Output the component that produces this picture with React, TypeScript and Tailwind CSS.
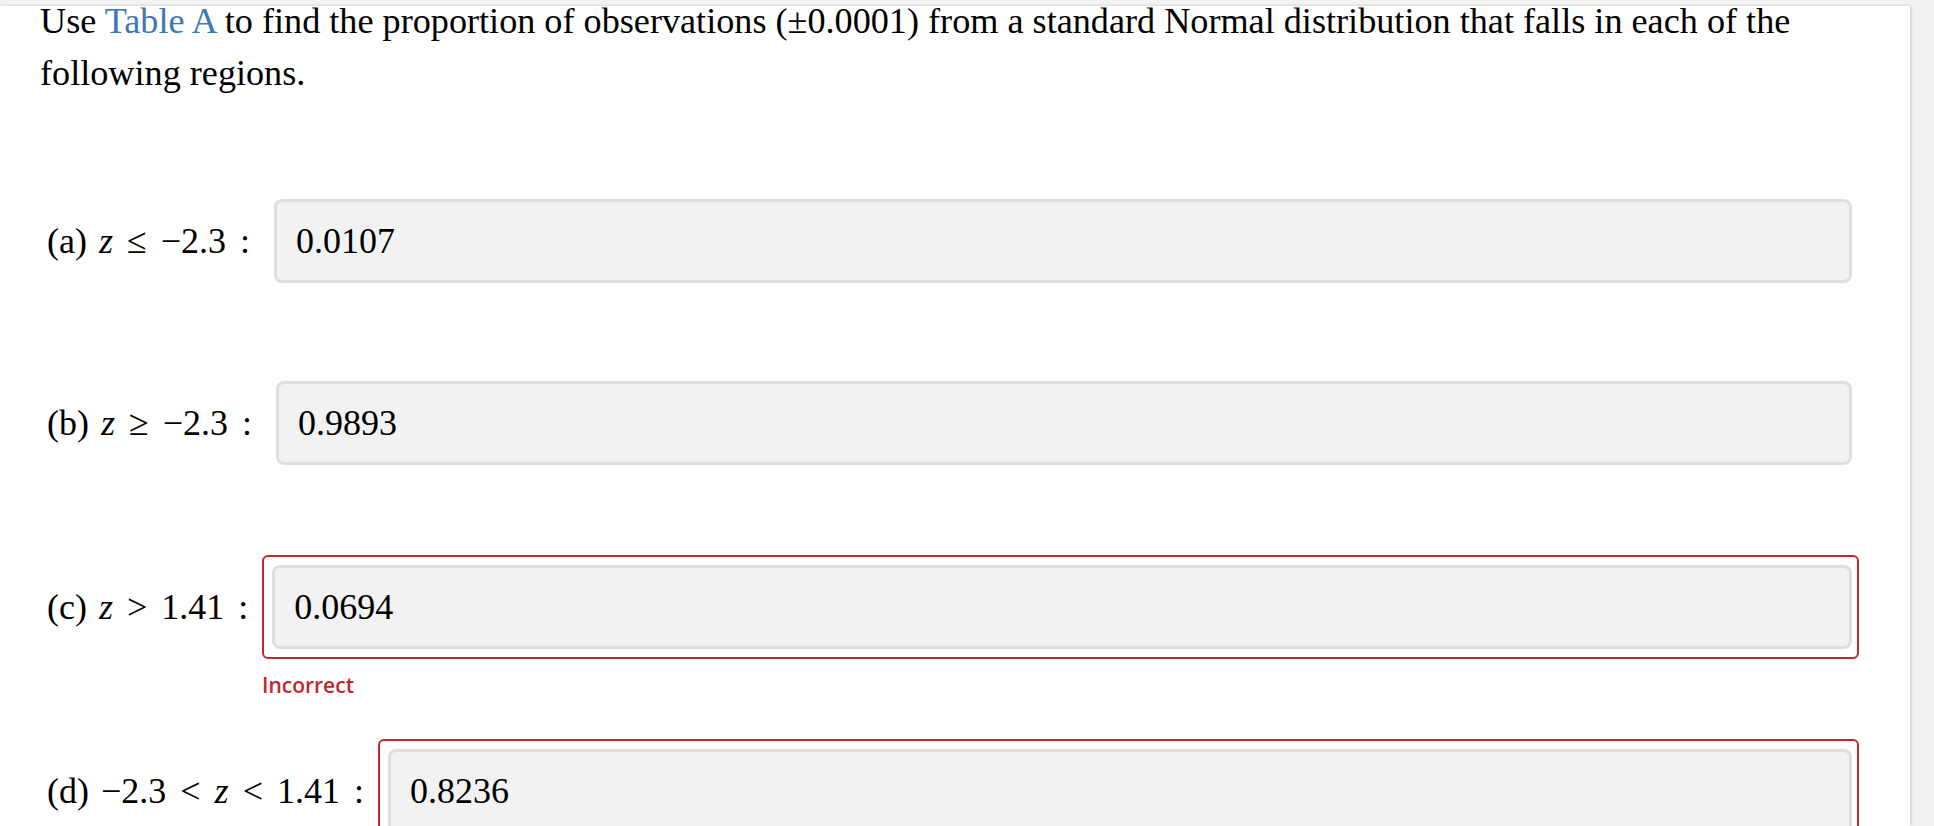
import React from "react";

type Part = { text: string; italic?: boolean; gap?: string };

type Row = {
  id: string;
  label: Part[];
  value: string;
  incorrect?: boolean;
};

const rows: Row[] = [
  {
    id: "a",
    label: [
      { text: "(a)" },
      { text: "z", italic: true, gap: "ml-[12px]" },
      { text: "≤", gap: "ml-[14px]" },
      { text: "−2.3", gap: "ml-[14px]" },
      { text: ":", gap: "ml-[14px]" },
    ],
    value: "0.0107",
  },
  {
    id: "b",
    label: [
      { text: "(b)" },
      { text: "z", italic: true, gap: "ml-[12px]" },
      { text: "≥", gap: "ml-[14px]" },
      { text: "−2.3", gap: "ml-[14px]" },
      { text: ":", gap: "ml-[14px]" },
    ],
    value: "0.9893",
  },
  {
    id: "c",
    label: [
      { text: "(c)" },
      { text: "z", italic: true, gap: "ml-[12px]" },
      { text: ">", gap: "ml-[14px]" },
      { text: "1.41", gap: "ml-[14px]" },
      { text: ":", gap: "ml-[14px]" },
    ],
    value: "0.0694",
    incorrect: true,
  },
  {
    id: "d",
    label: [
      { text: "(d)" },
      { text: "−2.3", gap: "ml-[12px]" },
      { text: "<", gap: "ml-[14px]" },
      { text: "z", italic: true, gap: "ml-[14px]" },
      { text: "<", gap: "ml-[14px]" },
      { text: "1.41", gap: "ml-[14px]" },
      { text: ":", gap: "ml-[14px]" },
    ],
    value: "0.8236",
    incorrect: true,
  },
];

const serif = "font-['Liberation_Serif','Times_New_Roman',serif]";

const AnswerRow = ({ row }: { row: Row }) => {
  return (
    <div>
      <div className="flex items-center">
        <div className={`${serif} flex items-baseline text-[36px] leading-none text-black whitespace-nowrap`}>
          {row.label.map((p, i) =>
            p.italic ? (
              <i key={i} className={p.gap}>
                {p.text}
              </i>
            ) : (
              <span key={i} className={p.gap}>
                {p.text}
              </span>
            )
          )}
        </div>
        <div
          className={`ml-[14px] flex-1 rounded-[6px] border-2 pl-[8px] pr-[5px] py-[8px] ${
            row.incorrect ? "border-[#c1272d]" : "border-transparent"
          }`}
        >
          <div className="h-[84px] rounded-[8px] border-[3px] border-[#dedede] bg-[#f2f2f2] pl-[19px] flex items-center">
            <span className={`${serif} text-[36px] leading-none text-black`}>
              {row.value}
            </span>
          </div>
        </div>
      </div>
      {row.incorrect && row.id === "c" && (
        <div className="mt-[12px] ml-[215px] h-[28px] font-['Open_Sans',sans-serif] text-[21px] leading-[28px] font-semibold text-[#c4262e]">
          Incorrect
        </div>
      )}
    </div>
  );
};

export default function App() {
  return (
    <div className="min-h-screen w-full bg-[#f2f2f2] pt-[6px] overflow-hidden">
      <div className="w-[1910px] h-[820px] bg-white shadow-[1px_0_3px_rgba(0,0,0,0.18)] pl-[40px] pr-[51px] overflow-hidden">
        <p className={`${serif} mt-[-11px] text-[36.2px] leading-[52px] text-black`}>
          Use <span className="text-[#3f76b5]">Table A</span> to find the proportion of
          observations (±0.0001) from a standard Normal distribution that falls in each of
          the following regions.
        </p>

        <div className="mt-[90px] pl-[7px] flex flex-col">
          <AnswerRow row={rows[0]} />
          <div className="mt-[78px]">
            <AnswerRow row={rows[1]} />
          </div>
          <div className="mt-[80px]">
            <AnswerRow row={rows[2]} />
          </div>
          <div className="mt-[40px]">
            <AnswerRow row={rows[3]} />
          </div>
        </div>
      </div>
    </div>
  );
}
